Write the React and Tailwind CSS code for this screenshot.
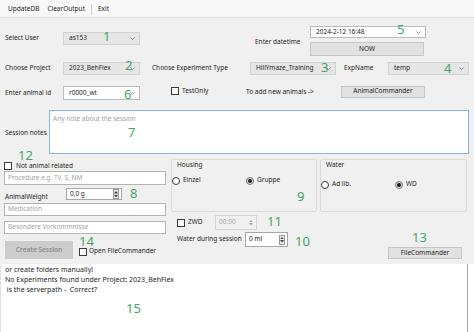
import React from "react";

const Chevron = () => (
  <svg width="5" height="3" viewBox="0 0 5 3" className="shrink-0">
    <path d="M0.4 0.4 L2.5 2.5 L4.6 0.4" fill="none" stroke="#6b6b6b" strokeWidth="0.7" />
  </svg>
);

const Combo = ({ w, value, white, h }) => (
  <div
    className={`${w} ${h || "h-[13px]"} flex items-center justify-between pl-[5px] pr-[4px] border ${
      white ? "bg-white border-[#bdbdbd]" : "bg-[#e6e6e6] border-[#d2d2d2]"
    }`}
  >
    <span>{value}</span>
    <Chevron />
  </div>
);

const Button = ({ className, children }) => (
  <div className={`flex items-center justify-center bg-[#e1e1e1] border border-[#c6c6c6] ${className}`}>{children}</div>
);

const Check = () => <span className="block w-[8px] h-[8px] shrink-0 border border-[#3a3a3a] bg-white" />;

const Radio = ({ checked }) =>
  checked ? (
    <span className="flex w-[8px] h-[8px] shrink-0 items-center justify-center rounded-full border border-[#7a7a7a] bg-[#d8d8d8]">
      <span className="block w-[4px] h-[4px] rounded-full bg-[#1a1a1a]" />
    </span>
  ) : (
    <span className="block w-[8px] h-[8px] shrink-0 rounded-full border border-[#3a3a3a] bg-white" />
  );

const Arrows = ({ boxed, light }) => (
  <div
    className={`flex flex-col items-center justify-center gap-[1px] w-[6px] h-[10px] ${
      boxed ? "border border-[#9a9a9a] bg-[#e8e8e8]" : ""
    }`}
  >
    <svg width="4" height="2.5" viewBox="0 0 4 2.5">
      <path d="M0 2.5 L2 0 L4 2.5 Z" fill={light ? "#a8a8a8" : "#404040"} />
    </svg>
    <svg width="4" height="2.5" viewBox="0 0 4 2.5">
      <path d="M0 0 L2 2.5 L4 0 Z" fill={light ? "#a8a8a8" : "#404040"} />
    </svg>
  </div>
);

const Input = ({ placeholder, className }) => (
  <div className={`flex items-center pl-[3px] bg-white border border-[#b4b4b4] text-[#a3a3a3] ${className}`}>
    {placeholder}
  </div>
);

const Num = ({ n, className }) => (
  <span className={`absolute text-[13px] leading-[13px] text-[#3fa862] ${className}`}>{n}</span>
);

export default function App() {
  return (
    <div className="relative w-[474px] h-[332px] overflow-hidden bg-[#f0f0f0] text-[6.5px] leading-none text-[#1e1e1e] font-['Noto_Sans','Open_Sans',sans-serif]">
      {/* Menu bar */}
      <div className="flex h-[18px] items-center bg-[#f8f8f8] border-b border-[#e2e2e2] pl-[8px] pt-[2px]">
        <span>UpdateDB</span>
        <span className="ml-[8px]">ClearOutput</span>
        <span className="ml-[6px] block h-[11px] w-px bg-[#d2d2d2]" />
        <span className="ml-[6px]">Exit</span>
      </div>

      {/* Row A */}
      <div className="flex h-[40px]">
        <div className="w-[63px] pl-[5px] self-center">Select User</div>
        <div className="self-center">
          <Combo w="w-[77px]" value="as153" />
        </div>
        <div className="ml-[115px] mt-[21px] w-[55px]">Enter datetime</div>
        <div className="flex flex-col pt-[8px] gap-[4px] w-[116px]">
          <Combo w="w-[116px]" h="h-[12px]" value="2024-2-12 16:48" white />
          <Button className="h-[14px] w-[114px]">NOW</Button>
        </div>
      </div>

      {/* Row B */}
      <div className="flex h-[21px] items-center">
        <div className="w-[63px] pl-[5px]">Choose Project</div>
        <Combo w="w-[77px]" value="2023_BehFlex" />
        <div className="ml-[12px] w-[98px]">Choose Experiment Type</div>
        <Combo w="w-[86px]" value="HillYmaze_Training" />
        <div className="ml-[8px] w-[44px]">ExpName</div>
        <Combo w="w-[81px]" value="temp" />
      </div>

      {/* Row C */}
      <div className="flex h-[28px] items-center">
        <div className="w-[63px] pl-[5px]">Enter animal id</div>
        <Combo w="w-[77px]" h="h-[14px]" value="r0000_wt" white />
        <div className="ml-[31px] w-[75px] flex items-center gap-[3px] mb-[4px]">
          <Check />
          <span>TestOnly</span>
        </div>
        <div className="w-[95px] mb-[2px]">To add new animals -&gt;</div>
        <Button className="w-[84px] h-[12px] mb-[3px]">AnimalCommander</Button>
      </div>

      {/* Session notes */}
      <div className="mt-[3px] flex h-[44px] items-center">
        <div className="w-[49px] pl-[5px] mt-[2px]">Session notes</div>
        <div className="w-[420px] h-[44px] bg-white border border-[#86b8e6] pl-[3px] pt-[5px] text-[#a0a0a0]">
          Any note about the session
        </div>
      </div>

      {/* Bottom area */}
      <div className="flex h-[110px]">
        {/* Left column */}
        <div className="w-[170px] flex flex-col">
          <div className="mt-[8px] flex h-[8px] items-center gap-[4px] pl-[4px]">
            <Check />
            <span>Not animal related</span>
          </div>
          <Input placeholder="Procedure e.g. TV, S, NM" className="mt-[1px] ml-[4px] w-[162px] h-[14px]" />
          <div className="mt-[3px] flex h-[12px]">
            <div className="w-[66px] pl-[5px] self-end">AnimalWeight</div>
            <div className="w-[56px] h-[12px] flex items-center justify-between pl-[3px] pr-[2px] bg-white border border-[#a8a8a8]">
              <span>0,0 g</span>
              <Arrows boxed />
            </div>
          </div>
          <Input placeholder="Medication" className="mt-[3px] ml-[4px] w-[162px] h-[13px]" />
          <Input placeholder="Besondere Vorkommnisse" className="mt-[5px] ml-[4px] w-[162px] h-[13px]" />
          <div className="mt-[7px] flex h-[18px] items-center">
            <div className="ml-[5px] w-[68px] h-[18px] flex items-center justify-center bg-[#cccccc] text-[#8a8a8a] font-semibold">
              Create Session
            </div>
            <div className="ml-[6px] mt-[3px] flex items-center gap-[2px]">
              <Check />
              <span>Open FileCommander</span>
            </div>
          </div>
        </div>

        {/* Right column */}
        <div className="flex-1 flex flex-col">
          <div className="mt-[5px] flex h-[53px] gap-[3px] pl-[1px]">
            <div className="w-[146px] border border-[#dadada] rounded-[2px] flex flex-col">
              <div className="pl-[5px] pt-[2px]">Housing</div>
              <div className="mt-[8px] flex items-center">
                <div className="w-[74px] flex items-center gap-[3px]">
                  <Radio />
                  <span>Einzel</span>
                </div>
                <div className="flex items-center gap-[3px]">
                  <Radio checked />
                  <span>Gruppe</span>
                </div>
              </div>
            </div>
            <div className="w-[147px] border border-[#dadada] rounded-[2px] flex flex-col">
              <div className="pl-[5px] pt-[2px]">Water</div>
              <div className="mt-[12px] flex items-center">
                <div className="w-[74px] flex items-center gap-[3px]">
                  <Radio />
                  <span>Ad lib.</span>
                </div>
                <div className="flex items-center gap-[3px]">
                  <Radio checked />
                  <span>WD</span>
                </div>
              </div>
            </div>
          </div>

          <div className="mt-[3px] flex h-[15px] items-center pl-[7px]">
            <div className="w-[38px] flex items-center gap-[3px]">
              <Check />
              <span>ZWD</span>
            </div>
            <div className="w-[42px] h-[15px] flex items-center justify-between pl-[3px] pr-[2px] bg-[#f0f0f0] border border-[#d6d6d6] text-[#a8a8a8]">
              <span>00:00</span>
              <Arrows light />
            </div>
          </div>

          <div className="mt-[2px] flex">
            <div className="h-[15px] flex items-center">
              <div className="w-[75px] pl-[7px]">Water during session</div>
              <div className="w-[43px] h-[15px] flex items-center justify-between pl-[3px] pr-[2px] bg-white border border-[#a8a8a8]">
                <span>0 ml</span>
                <Arrows boxed />
              </div>
            </div>
            <Button className="ml-[100px] mt-[15px] w-[74px] h-[12px]">FileCommander</Button>
          </div>
        </div>
      </div>

      {/* Output */}
      <div className="h-[68px] bg-white">
        <div className="w-[468px] h-full border-r border-[#a6a6a6] border-l border-l-[#e2e2e2] pl-[4px] pt-[1px] text-[7px] leading-[10px]">
          <div>or create folders manually!</div>
          <div>No Experiments found under Project: 2023_BehFlex</div>
          <div className="whitespace-pre"> is the serverpath -  Correct?</div>
        </div>
      </div>

      {/* Annotation numbers */}
      <Num n="1" className="left-[103px] top-[30px]" />
      <Num n="2" className="left-[125px] top-[59px]" />
      <Num n="3" className="left-[321px] top-[61px]" />
      <Num n="4" className="left-[444px] top-[62px]" />
      <Num n="5" className="left-[397px] top-[23px]" />
      <Num n="6" className="left-[124px] top-[88px]" />
      <Num n="7" className="left-[128px] top-[126px]" />
      <Num n="8" className="left-[130px] top-[187px]" />
      <Num n="9" className="left-[297px] top-[190px]" />
      <Num n="10" className="left-[295px] top-[235px]" />
      <Num n="11" className="left-[267px] top-[215px]" />
      <Num n="12" className="left-[18px] top-[149px]" />
      <Num n="13" className="left-[412px] top-[231px]" />
      <Num n="14" className="left-[79px] top-[235px]" />
      <Num n="15" className="left-[126px] top-[302px]" />
    </div>
  );
}
